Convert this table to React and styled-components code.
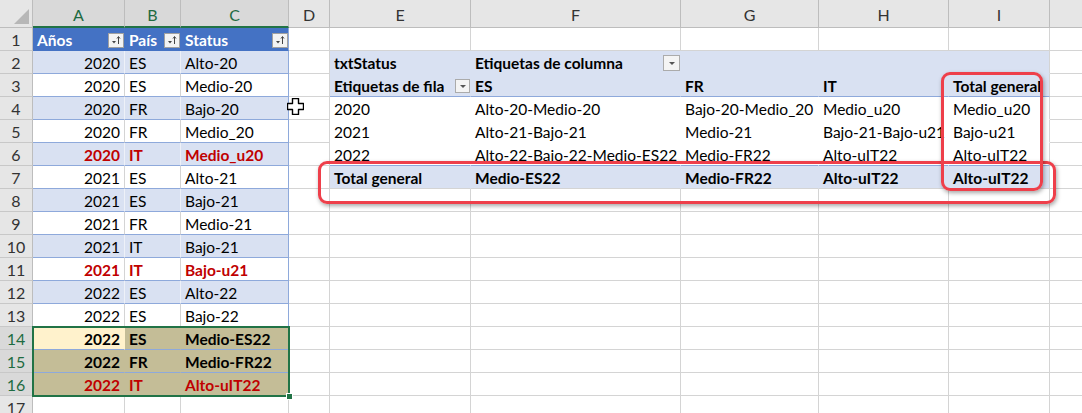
import React from "react";
import styled, { createGlobalStyle } from "styled-components";

const GlobalStyle = createGlobalStyle`
  html, body {
    margin: 0;
    padding: 0;
    background: #fff;
    overflow: hidden;
  }
  body {
    font-family: Lato, "Noto Sans", sans-serif;
  }
`;

const WIDTHS = [33, 92, 56, 108, 41, 141, 210, 138, 130, 101, 110];
const LETTERS = ["A", "B", "C", "D", "E", "F", "G", "H", "I", "J"];

const RED = "#c00000";
const BAND = "#d9e1f2";
const HEAD_BLUE = "#4472c4";
const TBL_LINE = "#8ea9db";
const GRID = "#d4d4d4";
const SEL_FILL = "#c4bd97";

const tableRows = [
  ["2020", "ES", "Alto-20"],
  ["2020", "ES", "Medio-20"],
  ["2020", "FR", "Bajo-20"],
  ["2020", "FR", "Medio_20"],
  ["2020", "IT", "Medio_u20"],
  ["2021", "ES", "Alto-21"],
  ["2021", "ES", "Bajo-21"],
  ["2021", "FR", "Medio-21"],
  ["2021", "IT", "Bajo-21"],
  ["2021", "IT", "Bajo-u21"],
  ["2022", "ES", "Alto-22"],
  ["2022", "ES", "Bajo-22"],
  ["2022", "ES", "Medio-ES22"],
  ["2022", "FR", "Medio-FR22"],
  ["2022", "IT", "Alto-uIT22"],
];

const pivotRows = [
  ["txtStatus", "Etiquetas de columna", "", "", ""],
  ["Etiquetas de fila", "ES", "FR", "IT", "Total general"],
  ["2020", "Alto-20-Medio-20", "Bajo-20-Medio_20", "Medio_u20", "Medio_u20"],
  ["2021", "Alto-21-Bajo-21", "Medio-21", "Bajo-21-Bajo-u21", "Bajo-u21"],
  ["2022", "Alto-22-Bajo-22-Medio-ES22", "Medio-FR22", "Alto-uIT22", "Alto-uIT22"],
  ["Total general", "Medio-ES22", "Medio-FR22", "Alto-uIT22", "Alto-uIT22"],
];

// works out fill, lines and text of one sheet cell
function cellFor(r, c) {
  const cell = { text: "", bg: "#fff", br: GRID, bb: GRID };

  if (c <= 2 && r === 1) {
    return {
      ...cell,
      text: ["Años", "País", "Status"][c],
      bg: HEAD_BLUE,
      br: c === 2 ? TBL_LINE : HEAD_BLUE,
      bb: HEAD_BLUE,
      color: "#fff",
      bold: true,
      sortBtn: true,
    };
  }

  if (c <= 2 && r >= 2 && r <= 16) {
    const data = tableRows[r - 2];
    const isRed = r === 6 || r === 11 || r === 16;
    const isBold = isRed || r >= 14;
    let bg = r % 2 === 0 ? BAND : "#fff";
    let br = c === 2 ? TBL_LINE : bg === BAND ? "#eef1f8" : GRID;
    if (r >= 14) {
      bg = r === 14 && c === 0 ? "#fff2cc" : SEL_FILL;
      br = c === 2 ? TBL_LINE : bg;
    }
    return {
      ...cell,
      text: data[c],
      bg,
      br,
      bb: TBL_LINE,
      bold: isBold,
      color: isRed ? RED : "#000",
      align: c === 0 ? "right" : "left",
    };
  }

  if (c >= 4 && c <= 8 && r >= 2 && r <= 7) {
    const text = pivotRows[r - 2][c - 4];
    const blue = r <= 3 || r === 7;
    const bg = blue ? BAND : "#fff";
    let bb = bg;
    if (r === 3 || r === 6) bb = TBL_LINE;
    if (r === 7) bb = GRID;
    return {
      ...cell,
      text,
      bg,
      br: c === 8 ? GRID : bg,
      bb,
      bold: r <= 3 || r === 7,
      pivotBtn: (r === 2 && c === 5) ? "big" : (r === 3 && c === 4) ? "small" : null,
    };
  }

  return cell;
}

function SortIcon() {
  return (
    <svg width="10" height="10" viewBox="0 0 10 10">
      <path d="M1 6 h4 l-2 2.5 z" fill="#444" />
      <path d="M7.5 9 V2" stroke="#444" strokeWidth="1" />
      <path d="M6 3.5 L7.5 1.5 L9 3.5" stroke="#444" strokeWidth="1" fill="none" />
    </svg>
  );
}

function DownIcon() {
  return (
    <svg width="8" height="5" viewBox="0 0 8 5">
      <path d="M1 1 h6 l-3 3 z" fill="#555" />
    </svg>
  );
}

function MoveCursor() {
  return (
    <svg width="17" height="17" viewBox="0 0 17 17">
      <path
        d="M5.5 0.5 h6 v5 h5 v6 h-5 v5 h-6 v-5 h-5 v-6 h5 z"
        fill="#fff"
        stroke="#000"
        strokeWidth="1.4"
        strokeLinejoin="round"
      />
    </svg>
  );
}

export default function App() {
  const rows = [];
  for (let r = 1; r <= 17; r++) rows.push(r);

  return (
    <>
      <GlobalStyle />
      <Sheet>
        <Corner />
        {LETTERS.map((l, i) => (
          <ColHeader key={l} $sel={i <= 2}>{l}</ColHeader>
        ))}
        {rows.map((r) => (
          <React.Fragment key={r}>
            <RowHeader $sel={r >= 14 && r <= 16}>{r}</RowHeader>
            {LETTERS.map((l, c) => {
              const cell = cellFor(r, c);
              return (
                <Cell
                  key={l}
                  $bg={cell.bg}
                  $br={cell.br}
                  $bb={cell.bb}
                  $bold={cell.bold}
                  $color={cell.color}
                  $align={cell.align}
                >
                  <CellText>{cell.text}</CellText>
                  {cell.sortBtn && (
                    <FilterButton>
                      <SortIcon />
                    </FilterButton>
                  )}
                  {cell.pivotBtn && (
                    <PivotButton $big={cell.pivotBtn === "big"}>
                      <DownIcon />
                    </PivotButton>
                  )}
                </Cell>
              );
            })}
          </React.Fragment>
        ))}

        <Selection />
        <Callout $x={318} $y={161} $w={738} $h={43} />
        <Callout $x={941} $y={72} $w={102} $h={119} />
        <CursorSpot>
          <MoveCursor />
        </CursorSpot>
      </Sheet>
    </>
  );
}

const Sheet = styled.div`
  position: relative;
  display: grid;
  grid-template-columns: ${WIDTHS.map((w) => w + "px").join(" ")};
  grid-template-rows: 28px repeat(17, 23px);
  width: 1082px;
  height: 413px;
  overflow: hidden;
  font-family: Lato, "Noto Sans", sans-serif;
  font-size: 15.5px;
  color: #000;
`;

const Corner = styled.div`
  position: relative;
  box-sizing: border-box;
  background: #e6e6e6;
  border-right: 1px solid #bdbdbd;
  border-bottom: 1px solid #bdbdbd;

  &::after {
    content: "";
    position: absolute;
    right: 3px;
    bottom: 3px;
    border-style: solid;
    border-width: 0 0 15px 15px;
    border-color: transparent transparent #b7b7b7 transparent;
  }
`;

const ColHeader = styled.div`
  display: flex;
  align-items: center;
  justify-content: center;
  box-sizing: border-box;
  background: ${(p) => (p.$sel ? "#d9d9d9" : "#e6e6e6")};
  color: ${(p) => (p.$sel ? "#1e6b41" : "#333")};
  border-right: 1px solid #bdbdbd;
  border-bottom: ${(p) => (p.$sel ? "2px solid #217346" : "1px solid #bdbdbd")};
  font-size: 16px;
  padding-top: 2px;
`;

const RowHeader = styled.div`
  display: flex;
  align-items: center;
  justify-content: center;
  box-sizing: border-box;
  background: ${(p) => (p.$sel ? "#d9d9d9" : "#e6e6e6")};
  color: ${(p) => (p.$sel ? "#1e6b41" : "#333")};
  border-right: 1px solid #bdbdbd;
  border-bottom: 1px solid #c8c8c8;
  font-size: 16px;
  padding-top: 1px;
`;

const Cell = styled.div`
  display: flex;
  align-items: center;
  justify-content: ${(p) => (p.$align === "right" ? "flex-end" : "flex-start")};
  box-sizing: border-box;
  min-width: 0;
  padding: 2px 4px 0 4px;
  background: ${(p) => p.$bg};
  border-right: 1px solid ${(p) => p.$br};
  border-bottom: 1px solid ${(p) => p.$bb};
  color: ${(p) => p.$color || "#000"};
  font-weight: ${(p) => (p.$bold ? 700 : 400)};
  white-space: nowrap;
  overflow: hidden;
`;

const CellText = styled.span`
  flex: 0 0 auto;
`;

const FilterButton = styled.div`
  display: flex;
  align-items: center;
  justify-content: center;
  box-sizing: border-box;
  width: 16px;
  height: 15px;
  margin: 0 -4px 0 auto;
  background: #f3f3f3;
  border: 1px solid #a0a0a0;
`;

const PivotButton = styled.div`
  display: flex;
  align-items: center;
  justify-content: center;
  box-sizing: border-box;
  width: ${(p) => (p.$big ? "17px" : "15px")};
  height: ${(p) => (p.$big ? "16px" : "14px")};
  margin: 0 -4px 0 auto;
  background: #f4f4f4;
  border: 1px solid #ababab;
`;

const Selection = styled.div`
  position: absolute;
  left: 32px;
  top: 326px;
  width: 258px;
  height: 71px;
  box-sizing: border-box;
  border: 2px solid #217346;
  pointer-events: none;

  &::after {
    content: "";
    position: absolute;
    right: -5px;
    bottom: -5px;
    width: 5px;
    height: 5px;
    background: #217346;
    border: 1px solid #fff;
  }
`;

const Callout = styled.div`
  position: absolute;
  left: ${(p) => p.$x}px;
  top: ${(p) => p.$y}px;
  width: ${(p) => p.$w}px;
  height: ${(p) => p.$h}px;
  box-sizing: border-box;
  border: 3px solid #ee3f4a;
  border-radius: 9px;
  box-shadow: 1px 2px 4px rgba(0, 0, 0, 0.35);
  pointer-events: none;
`;

const CursorSpot = styled.div`
  position: absolute;
  left: 287px;
  top: 98px;
  width: 17px;
  height: 17px;
  line-height: 0;
`;
